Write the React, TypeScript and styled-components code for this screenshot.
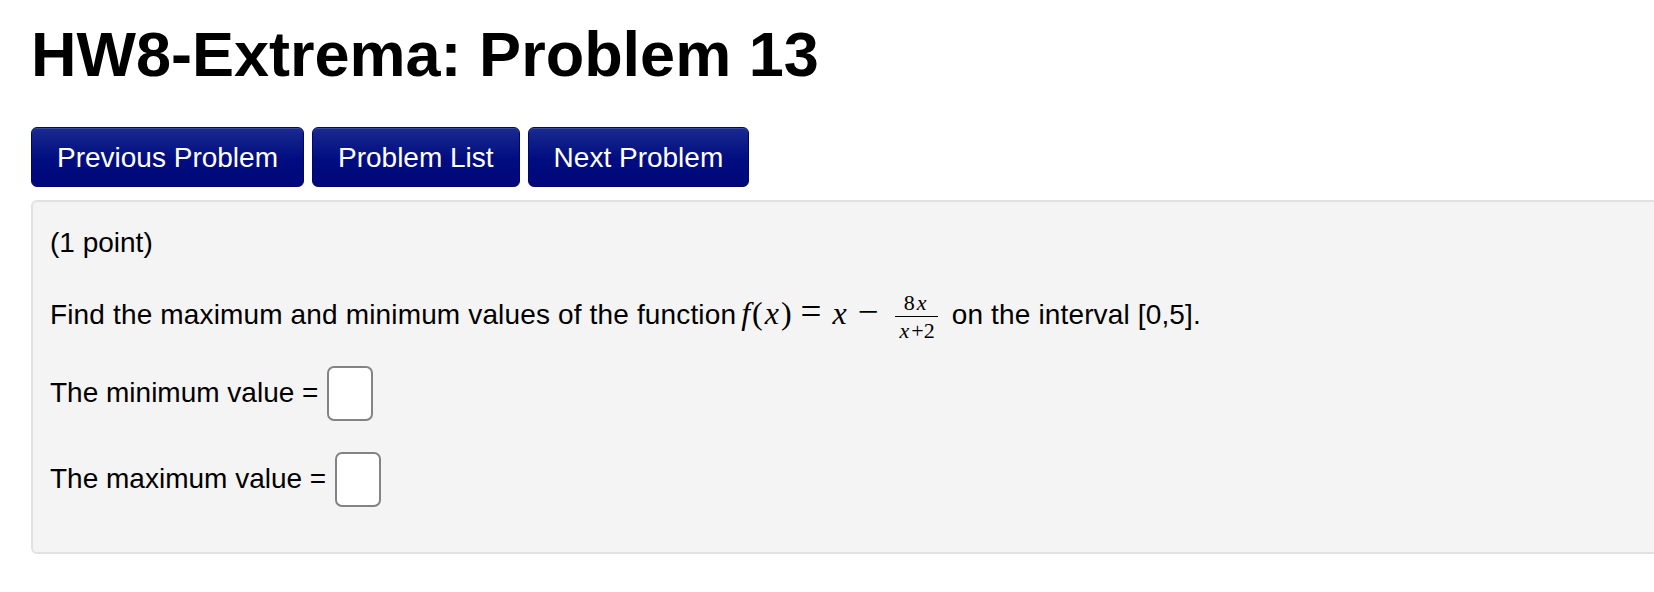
import React from "react";
import styled, {createGlobalStyle} from "styled-components";

const GlobalStyle = createGlobalStyle`
    html, body {
        margin: 0;
        padding: 0;
        background: #fff;
        overflow-x: hidden;
    }
    body {
        font-family: "Liberation Sans", Arial, Helvetica, sans-serif;
        color: #000;
    }
`;

const Page = styled.div`
    padding: 20px 0 0 31px;
`;

const Title = styled.h1`
    margin: 0;
    font-size: 63px;
    line-height: 69px;
    font-weight: 700;
`;

const NavBar = styled.div`
    display: flex;
    gap: 8px;
    margin-top: 38px;
`;

const NavButton = styled.button`
    font-family: inherit;
    font-size: 28px;
    line-height: 34px;
    color: #fff;
    padding: 13px 25px 11px;
    border: 1px solid #00066a;
    border-radius: 6px;
    background: linear-gradient(#1a2a90, #000c80 55%, #00087a);
    box-shadow: inset 0 1px 0 rgba(255, 255, 255, 0.15);
    cursor: pointer;
`;

const Panel = styled.div`
    display: flex;
    flex-direction: column;
    margin-top: 13px;
    margin-right: -20px;
    padding: 20px 17px 46px;
    background: #f4f4f4;
    border: 2px solid #e1e1e1;
    border-radius: 6px;
    font-size: 28px;
    line-height: 42px;
`;

const Line = styled.div<{ $top?: number; $spacing?: number }>`
    margin-top: ${p => p.$top ?? 0}px;
    letter-spacing: ${p => p.$spacing ?? 0}px;
    height: 42px;
    white-space: nowrap;
`;

const Row = styled.div<{ $top: number }>`
    display: flex;
    align-items: center;
    margin-top: ${p => p.$top}px;
    height: 54px;
`;

const AnswerBox = styled.input`
    box-sizing: border-box;
    width: 46px;
    height: 55px;
    margin-left: 9px;
    border: 2px solid #838383;
    border-radius: 7px;
    background: #fff;
    padding: 0;
`;

const MathSpan = styled.span`
    font-family: "Liberation Serif", "Times New Roman", serif;
    font-size: 32px;
    letter-spacing: 0;
    margin: 0 0 0 3px;
`;

const Var = styled.i`
    font-style: italic;
    padding: 0 2px;
`;

const Op = styled.span`
    font-size: 37px;
    padding: 0 9px;
`;

const Frac = styled.span`
    display: inline-flex;
    flex-direction: column;
    align-items: center;
    vertical-align: middle;
    margin: 0 14px 0 7px;
    font-size: 22px;
    line-height: 20px;
`;

const Num = styled.span`
    padding: 0 4px 3px;
`;

const Den = styled.span`
    border-top: 1.5px solid #000;
    padding: 4px 3px 0;
`;

const App = () => {
    return (
        <Page>
            <GlobalStyle/>
            <Title>HW8-Extrema: Problem 13</Title>
            <NavBar>
                <NavButton>Previous Problem</NavButton>
                <NavButton>Problem List</NavButton>
                <NavButton>Next Problem</NavButton>
            </NavBar>
            <Panel>
                <Line>(1 point)</Line>
                <Line $top={27} $spacing={0.15}>
                    Find the maximum and minimum values of the function
                    <MathSpan>
                        <Var>f</Var>(<Var>x</Var>)<Op>=</Op><Var>x</Var><Op>−</Op>
                        <Frac>
                            <Num>8<Var>x</Var></Num>
                            <Den><Var>x</Var>+2</Den>
                        </Frac>
                    </MathSpan>
                    on the interval [0,5].
                </Line>
                <Row $top={33}>
                    The minimum value =<AnswerBox type="text"/>
                </Row>
                <Row $top={32}>
                    The maximum value =<AnswerBox type="text"/>
                </Row>
            </Panel>
        </Page>
    );
};

export default App;
